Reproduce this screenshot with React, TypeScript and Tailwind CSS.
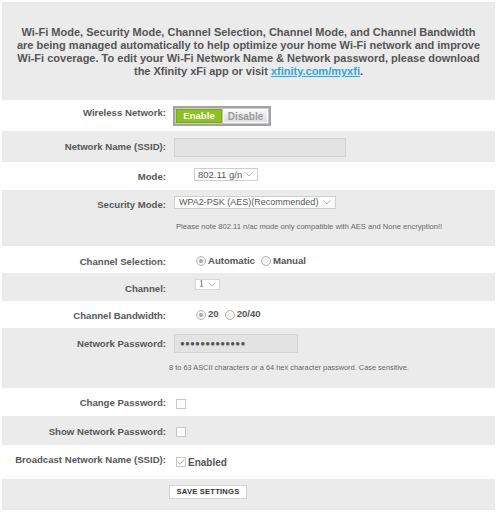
import React from 'react';

const label = "w-[164px] shrink-0 text-right text-[9.6px] leading-[12px] font-bold text-[#575757]";

function Chevron() {
  return (
    <svg width="8" height="5" viewBox="0 0 8 5" className="ml-auto shrink-0">
      <path d="M0.5 0.5 L4 4 L7.5 0.5" fill="none" stroke="#aaa" strokeWidth="0.9" />
    </svg>
  );
}

function Radio({ checked }: { checked?: boolean }) {
  return (
    <span className="inline-flex w-[10px] h-[10px] rounded-full border border-[#b5b5b5] bg-[#f4f4f4] items-center justify-center">
      {checked && <span className="w-[4px] h-[4px] rounded-full bg-[#a8a8a8]" />}
    </span>
  );
}

function Checkbox({ checked }: { checked?: boolean }) {
  return (
    <span className="inline-flex w-[10px] h-[10px] border border-[#c8c8c8] bg-white items-center justify-center">
      {checked && (
        <svg width="8" height="8" viewBox="0 0 8 8">
          <path d="M1 4.2 L3 6.3 L7 1.5" fill="none" stroke="#aaa" strokeWidth="1" />
        </svg>
      )}
    </span>
  );
}

export default function App() {
  return (
    <div className="w-[500px] h-[513px] bg-white pt-[2px] pl-[2px] pr-[5px] font-['Liberation_Sans',Arial,sans-serif] text-[#555]">
      <div className="h-[98px] bg-[#ebebeb] flex items-center justify-center text-center text-[11px] leading-[12.8px] font-bold text-[#555] pt-[2px]">
        <p>
          Wi-Fi Mode, Security Mode, Channel Selection, Channel Mode, and Channel Bandwidth
          <br />
          are being managed automatically to help optimize your home Wi-Fi network and improve
          <br />
          Wi-Fi coverage. To edit your Wi-Fi Network Name &amp; Network password, please download
          <br />
          the Xfinity xFi app or visit <a href="#" className="text-[#2aa7e0] underline">xfinity.com/myxfi</a>.
        </p>
      </div>

      {/* Wireless Network */}
      <div className="h-[31px] bg-white flex gap-[7px]">
        <div className={label + " pt-[7px]"}>Wireless Network:</div>
        <div className="pt-[6px]">
          <div className="flex w-[98px] h-[20px] border-[2px] border-[#a3a3a3] bg-[#c8c8c8] p-[1px] gap-[1px]">
            <div className="w-[46px] bg-[#8cc21c] border border-[#7aad10] text-white text-[9.6px] font-bold flex items-center justify-center">Enable</div>
            <div className="flex-1 bg-gradient-to-b from-[#f7f7f7] to-[#dedede] border border-white text-[#9a9a9a] text-[10px] font-bold flex items-center justify-center">Disable</div>
          </div>
        </div>
      </div>

      {/* Network Name */}
      <div className="h-[31px] bg-[#ebebeb] flex gap-[8px]">
        <div className={label + " pt-[10px]"}>Network Name (SSID):</div>
        <div className="pt-[7px]">
          <div className="w-[172px] h-[19px] bg-[#e3e3e3] border border-[#d2d2d2]" />
        </div>
      </div>

      {/* Mode */}
      <div className="h-[28px] bg-white flex gap-[8px]">
        <div className={label + " pt-[9px]"}>Mode:</div>
        <div className="pt-[6px] pl-[20px]">
          <div className="w-[64px] h-[13px] bg-white border border-[#cfcfcf] flex items-center pl-[3px] pr-[4px] text-[9.5px] leading-none text-[#555]">
            802.11 g/n
            <Chevron />
          </div>
        </div>
      </div>

      {/* Security Mode */}
      <div className="h-[56px] bg-[#ebebeb] flex gap-[8px]">
        <div className={label + " pt-[9px]"}>Security Mode:</div>
        <div className="pt-[6px] flex flex-col">
          <div className="w-[162px] h-[13px] bg-white border border-[#cfcfcf] flex items-center pl-[4px] pr-[4px] text-[9px] leading-none text-[#555]">
            WPA2-PSK (AES)(Recommended)
            <Chevron />
          </div>
          <p className="mt-[13px] pl-[2px] text-[7.6px] leading-[9px] text-[#666] whitespace-nowrap">
            Please note 802.11 n/ac mode only compatible with AES and None encryption!!
          </p>
        </div>
      </div>

      {/* Channel Selection */}
      <div className="h-[27px] bg-white flex gap-[8px]">
        <div className={label + " pt-[9.5px]"}>Channel Selection:</div>
        <div className="pt-[8px] pl-[22px] flex items-center gap-[2px] h-[22px] text-[9.6px] font-bold text-[#555]">
          <Radio checked />
          <span className="mr-[4px]">Automatic</span>
          <Radio />
          <span>Manual</span>
        </div>
      </div>

      {/* Channel */}
      <div className="h-[28px] bg-[#ebebeb] flex gap-[8px]">
        <div className={label + " pt-[10px]"}>Channel:</div>
        <div className="pt-[6px] pl-[21px]">
          <div className="w-[25px] h-[11px] bg-white border border-[#d6d6d6] flex items-center pl-[3px] pr-[3px] text-[9.5px] leading-none text-[#666] font-['Liberation_Serif',serif]">
            1
            <Chevron />
          </div>
        </div>
      </div>

      {/* Channel Bandwidth */}
      <div className="h-[27px] bg-white flex gap-[8px]">
        <div className={label + " pt-[9px]"}>Channel Bandwidth:</div>
        <div className="pt-[7px] pl-[22px] flex items-center gap-[2px] h-[20px] text-[9.6px] font-bold text-[#555]">
          <Radio checked />
          <span className="mr-[4px]">20</span>
          <Radio />
          <span>20/40</span>
        </div>
      </div>

      {/* Network Password */}
      <div className="h-[60px] bg-[#ebebeb] flex gap-[8px]">
        <div className={label + " pt-[10px]"}>Network Password:</div>
        <div className="pt-[6px] flex flex-col">
          <div className="w-[124px] h-[19px] bg-[#e3e3e3] border border-[#d2d2d2] flex items-center pl-[5px] text-[8px] tracking-[0.2px] text-[#555]">
            ●●●●●●●●●●●●●
          </div>
          <p className="mt-[10px] -ml-[5px] text-[7.4px] leading-[9px] text-[#666] whitespace-nowrap">
            8 to 63 ASCII characters or a 64 hex character password. Case sensitive.
          </p>
        </div>
      </div>

      {/* Change Password */}
      <div className="h-[28px] bg-white flex gap-[8px]">
        <div className={label + " pt-[9px]"}>Change Password:</div>
        <div className="pt-[11px] pl-[2px] flex">
          <Checkbox />
        </div>
      </div>

      {/* Show Network Password */}
      <div className="h-[29px] bg-[#ebebeb] flex gap-[8px]">
        <div className={label + " pt-[10px]"}>Show Network Password:</div>
        <div className="pt-[11px] pl-[2px] flex">
          <Checkbox />
        </div>
      </div>

      {/* Broadcast */}
      <div className="h-[34px] bg-white flex gap-[8px]">
        <div className={label + " pt-[9px]"}>Broadcast Network Name (SSID):</div>
        <div className="pt-[10px] pl-[2px] flex items-center gap-[2px] h-[24px] text-[10px] font-bold text-[#555]">
          <Checkbox checked />
          <span>Enabled</span>
        </div>
      </div>

      {/* Save */}
      <div className="h-[31px] bg-[#ebebeb] flex">
        <div className="pt-[6px] pl-[167px]">
          <button className="w-[78px] h-[14px] bg-white border border-[#d2d2d2] text-[7.6px] font-bold text-[#333] tracking-[0.2px] leading-none flex items-center justify-center">
            SAVE SETTINGS
          </button>
        </div>
      </div>
    </div>
  );
}
